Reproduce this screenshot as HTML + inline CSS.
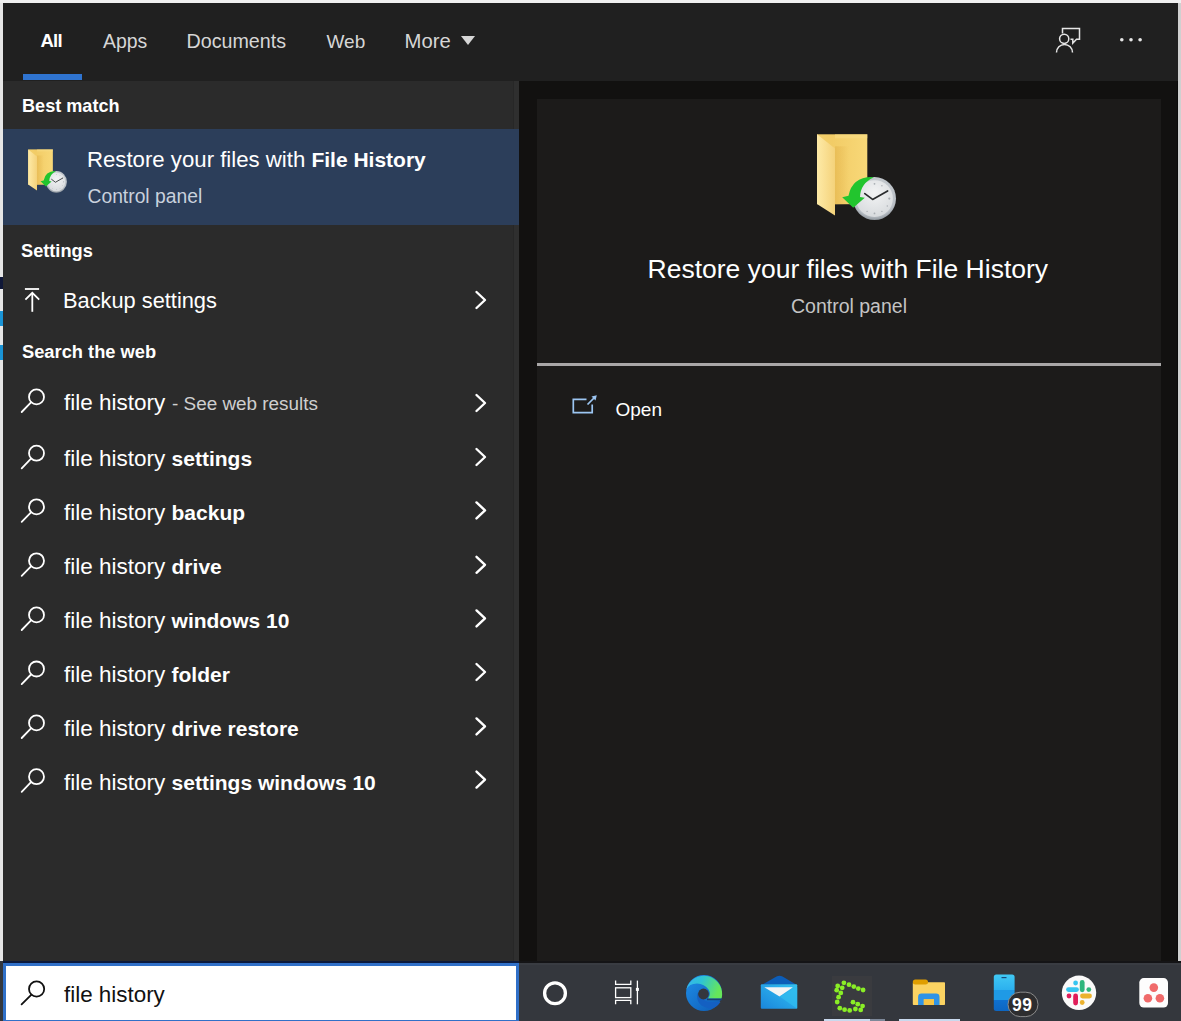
<!DOCTYPE html>
<html><head><meta charset="utf-8"><style>
html,body{margin:0;padding:0;}
body{width:1181px;height:1021px;position:relative;overflow:hidden;background:#f0f0f0;font-family:"Liberation Sans",sans-serif;}
.t{position:absolute;white-space:nowrap;line-height:1;}
.t b{font-weight:700;}
.r{position:absolute;}
svg{position:absolute;left:0;top:0;}
</style></head><body>
<div class="r" style="left:3px;top:3px;width:1175px;height:1018px;background:#121110"></div>
<div class="r" style="left:1178px;top:3px;width:3px;height:958px;background:#d0d0d0"></div><div class="r" style="left:1177px;top:81px;width:1px;height:880px;background:#0a0a0a"></div><div class="r" style="left:0;top:3px;width:3px;height:958px;background:#e6e6e6"></div>
<div class="r" style="left:0;top:277px;width:3px;height:12px;background:#101838"></div>
<div class="r" style="left:0;top:311px;width:3px;height:15px;background:#1a94d6"></div>
<div class="r" style="left:0;top:345px;width:3px;height:15px;background:#1a94d6"></div>
<div class="r" style="left:3px;top:3px;width:1175px;height:78px;background:#202020"></div>
<div class="r" style="left:23px;top:74px;width:59px;height:6px;background:#2f74d0"></div>
<div class="r" style="left:3px;top:81px;width:516px;height:882px;background:#2b2b2b"></div>
<div class="r" style="left:513px;top:81px;width:1px;height:882px;background:#272727"></div><div class="r" style="left:514px;top:81px;width:5px;height:882px;background:#2f2f2f"></div>
<div class="r" style="left:3px;top:129px;width:516px;height:96px;background:#2c3e5a"></div>
<div class="r" style="left:537px;top:99px;width:624px;height:862px;background:#1c1b1a"></div>
<div class="r" style="left:537px;top:363px;width:624px;height:3px;background:#a9a7a7"></div>
<div class="r" style="left:0px;top:961px;width:1181px;height:60px;background:#34373d"></div><div class="r" style="left:519px;top:961px;width:662px;height:2px;background:#141416"></div><div class="r" style="left:519px;top:963px;width:662px;height:2px;background:#393c42"></div>
<div class="r" style="left:3px;top:961px;width:516px;height:2px;background:#0c1a3c"></div><div class="r" style="left:3px;top:963px;width:510px;height:54px;background:#fff;border:3px solid #3070c8;border-bottom-width:1px"></div>
<div class="t" style="left:40.5px;top:32.2px;font-size:18.5px;color:#ffffff;font-weight:700;letter-spacing:-0.8px">All</div>
<div class="t" style="left:103.0px;top:31.5px;font-size:19.4px;color:#d6d6d6;font-weight:400;">Apps</div>
<div class="t" style="left:186.5px;top:31.5px;font-size:19.7px;color:#d6d6d6;font-weight:400;">Documents</div>
<div class="t" style="left:326.5px;top:32.1px;font-size:19px;color:#d6d6d6;font-weight:400;">Web</div>
<div class="t" style="left:404.5px;top:31.0px;font-size:20.3px;color:#d6d6d6;font-weight:400;">More</div>
<div class="t" style="left:22.0px;top:97.3px;font-size:18.1px;color:#fff;font-weight:700;">Best match</div>
<div class="t" style="left:87.0px;top:149.0px;font-size:22.2px;color:#fff;font-weight:400;">Restore your files with <b style="font-size:21px">File History</b></div>
<div class="t" style="left:87.5px;top:186.7px;font-size:19.3px;color:#c9d1dd;font-weight:400;">Control panel</div>
<div class="t" style="left:21.0px;top:241.6px;font-size:18.2px;color:#fff;font-weight:700;">Settings</div>
<div class="t" style="left:63.0px;top:289.5px;font-size:21.8px;color:#fff;font-weight:400;">Backup settings</div>
<div class="t" style="left:22.0px;top:343.3px;font-size:18.3px;color:#fff;font-weight:700;">Search the web</div>
<div class="t" style="left:64.0px;top:392.0px;font-size:22.5px;color:#fff;font-weight:400;">file history</div>
<div class="t" style="left:172.0px;top:395.0px;font-size:18.9px;color:#cfcfcf;font-weight:400;">- See web results</div>
<div class="t" style="left:64.0px;top:448.3px;font-size:22.5px;color:#fff;font-weight:400;">file history <b style="font-size:21px">settings</b></div>
<div class="t" style="left:64.0px;top:501.9px;font-size:22.5px;color:#fff;font-weight:400;">file history <b style="font-size:21px">backup</b></div>
<div class="t" style="left:64.0px;top:555.9px;font-size:22.5px;color:#fff;font-weight:400;">file history <b style="font-size:21px">drive</b></div>
<div class="t" style="left:64.0px;top:610.0px;font-size:22.5px;color:#fff;font-weight:400;">file history <b style="font-size:21px">windows 10</b></div>
<div class="t" style="left:64.0px;top:664.1px;font-size:22.5px;color:#fff;font-weight:400;">file history <b style="font-size:21px">folder</b></div>
<div class="t" style="left:64.0px;top:718.0px;font-size:22.5px;color:#fff;font-weight:400;">file history <b style="font-size:21px">drive restore</b></div>
<div class="t" style="left:64.0px;top:771.8px;font-size:22.5px;color:#fff;font-weight:400;">file history <b style="font-size:21px">settings windows 10</b></div>
<div class="t" style="left:647.5px;top:255.8px;font-size:26.5px;color:#fff;font-weight:400;">Restore your files with File History</div>
<div class="t" style="left:791.0px;top:297.3px;font-size:19.5px;color:#c4c4c4;font-weight:400;">Control panel</div>
<div class="t" style="left:615.5px;top:399.7px;font-size:19px;color:#fff;font-weight:400;">Open</div>
<div class="t" style="left:64.0px;top:983.7px;font-size:22.4px;color:#111;font-weight:400;">file history</div>

<svg width="1181" height="1021" viewBox="0 0 1181 1021">
<defs>
<linearGradient id="fBack" x1="0" y1="0" x2="1" y2="0">
 <stop offset="0" stop-color="#f4d06c"/><stop offset="0.3" stop-color="#f2cc66"/><stop offset="1" stop-color="#f8d878"/>
</linearGradient>
<linearGradient id="fFront" x1="0" y1="0" x2="1" y2="0">
 <stop offset="0" stop-color="#fdeaa6"/><stop offset="0.3" stop-color="#fbe39a"/><stop offset="1" stop-color="#f4d27a"/>
</linearGradient>
<linearGradient id="fShadow" x1="0" y1="0" x2="1" y2="0">
 <stop offset="0" stop-color="#e2b24a" stop-opacity="0.55"/><stop offset="1" stop-color="#e2b24a" stop-opacity="0"/>
</linearGradient>
<radialGradient id="clockRing" cx="0.5" cy="0.4" r="0.6">
 <stop offset="0" stop-color="#d8dce0"/><stop offset="0.85" stop-color="#b9bfc5"/><stop offset="1" stop-color="#8f969d"/>
</radialGradient>
<radialGradient id="clockFace" cx="0.5" cy="0.35" r="0.7">
 <stop offset="0" stop-color="#f2f3f4"/><stop offset="1" stop-color="#d6d9dc"/>
</radialGradient>
<linearGradient id="edgeTop" x1="0" y1="0" x2="1" y2="0.3">
 <stop offset="0" stop-color="#38b2f2"/><stop offset="0.45" stop-color="#2ec4d4"/><stop offset="1" stop-color="#66e65a"/>
</linearGradient>
<linearGradient id="edgeBot" x1="0" y1="0" x2="1" y2="1">
 <stop offset="0" stop-color="#1f8ee8"/><stop offset="1" stop-color="#0d5bb5"/>
</linearGradient>
<linearGradient id="mailBody" x1="0" y1="1" x2="1" y2="0">
 <stop offset="0" stop-color="#1a86dc"/><stop offset="1" stop-color="#33c2f2"/>
</linearGradient>
<linearGradient id="phoneG" x1="0" y1="0" x2="0" y2="1">
 <stop offset="0" stop-color="#40c8f4"/><stop offset="0.42" stop-color="#2cb0ee"/><stop offset="0.43" stop-color="#1f9ae6"/><stop offset="0.7" stop-color="#1f9ae6"/><stop offset="0.71" stop-color="#0f70cf"/><stop offset="1" stop-color="#0d66c2"/>
</linearGradient>
<g id="fhIcon">
 <rect x="0" y="0" width="50.3" height="69.9" fill="url(#fBack)"/>
 <rect x="18" y="0" width="32.3" height="4" fill="#f9dc84" opacity="0.6"/>
 <rect x="18" y="12" width="14" height="58" fill="url(#fShadow)"/>
 <polygon points="0,0 18,14.3 18,81.2 0,69.7" fill="url(#fFront)"/>
 <circle cx="57.5" cy="64.3" r="21.5" fill="url(#clockRing)"/>
 <circle cx="57.5" cy="64.3" r="18.4" fill="url(#clockFace)"/>
 <g fill="#a9aeb3">
  <circle cx="57.5" cy="49.5" r="0.9"/><circle cx="57.5" cy="79.1" r="0.9"/><circle cx="72.3" cy="64.3" r="1.1"/><circle cx="42.7" cy="64.3" r="0.9"/>
  <circle cx="64.9" cy="51.5" r="0.7"/><circle cx="70.3" cy="56.9" r="0.7"/><circle cx="70.3" cy="71.7" r="0.7"/><circle cx="64.9" cy="77.1" r="0.7"/><circle cx="50.1" cy="77.1" r="0.7"/>
 </g>
 <polyline points="47.8,59.3 55.6,65.1 70.6,56.7" fill="none" stroke="#2a2c2e" stroke-width="1.7" stroke-linejoin="round" stroke-linecap="round"/>
 <path d="M54.6,42.7 Q35,43 31.5,61.5 L25.2,63 L36.2,73.5 L47.8,63.5 L43,62.8 Q43.5,49 56.5,43.2 Z" fill="#22c52e"/>
</g>
</defs>
<polygon points="461,36 475,36 468,45" fill="#d6d6d6"/>
<circle cx="36.5" cy="396.9" r="7.5" fill="none" stroke="#fff" stroke-width="1.8"/><line x1="21.7" y1="412.0" x2="31" y2="402.4" stroke="#fff" stroke-width="1.8" stroke-linecap="round"/>
<circle cx="36.5" cy="453.2" r="7.5" fill="none" stroke="#fff" stroke-width="1.8"/><line x1="21.7" y1="468.3" x2="31" y2="458.7" stroke="#fff" stroke-width="1.8" stroke-linecap="round"/>
<circle cx="36.5" cy="506.8" r="7.5" fill="none" stroke="#fff" stroke-width="1.8"/><line x1="21.7" y1="521.9" x2="31" y2="512.3" stroke="#fff" stroke-width="1.8" stroke-linecap="round"/>
<circle cx="36.5" cy="560.8" r="7.5" fill="none" stroke="#fff" stroke-width="1.8"/><line x1="21.7" y1="575.9" x2="31" y2="566.3" stroke="#fff" stroke-width="1.8" stroke-linecap="round"/>
<circle cx="36.5" cy="614.9" r="7.5" fill="none" stroke="#fff" stroke-width="1.8"/><line x1="21.7" y1="630.0" x2="31" y2="620.4" stroke="#fff" stroke-width="1.8" stroke-linecap="round"/>
<circle cx="36.5" cy="669.0" r="7.5" fill="none" stroke="#fff" stroke-width="1.8"/><line x1="21.7" y1="684.1" x2="31" y2="674.5" stroke="#fff" stroke-width="1.8" stroke-linecap="round"/>
<circle cx="36.5" cy="722.9" r="7.5" fill="none" stroke="#fff" stroke-width="1.8"/><line x1="21.7" y1="738.0" x2="31" y2="728.4" stroke="#fff" stroke-width="1.8" stroke-linecap="round"/>
<circle cx="36.5" cy="776.7" r="7.5" fill="none" stroke="#fff" stroke-width="1.8"/><line x1="21.7" y1="791.8" x2="31" y2="782.2" stroke="#fff" stroke-width="1.8" stroke-linecap="round"/>
<polyline points="476.5,292.0 485,300.0 476.5,308.0" fill="none" stroke="#fff" stroke-width="2.4" stroke-linecap="round" stroke-linejoin="round"/>
<polyline points="476.5,395.0 485,403.0 476.5,411.0" fill="none" stroke="#fff" stroke-width="2.4" stroke-linecap="round" stroke-linejoin="round"/>
<polyline points="476.5,449.0 485,457.0 476.5,465.0" fill="none" stroke="#fff" stroke-width="2.4" stroke-linecap="round" stroke-linejoin="round"/>
<polyline points="476.5,502.4 485,510.4 476.5,518.4" fill="none" stroke="#fff" stroke-width="2.4" stroke-linecap="round" stroke-linejoin="round"/>
<polyline points="476.5,556.8 485,564.8 476.5,572.8" fill="none" stroke="#fff" stroke-width="2.4" stroke-linecap="round" stroke-linejoin="round"/>
<polyline points="476.5,610.4 485,618.4 476.5,626.4" fill="none" stroke="#fff" stroke-width="2.4" stroke-linecap="round" stroke-linejoin="round"/>
<polyline points="476.5,664.0 485,672.0 476.5,680.0" fill="none" stroke="#fff" stroke-width="2.4" stroke-linecap="round" stroke-linejoin="round"/>
<polyline points="476.5,718.4 485,726.4 476.5,734.4" fill="none" stroke="#fff" stroke-width="2.4" stroke-linecap="round" stroke-linejoin="round"/>
<polyline points="476.5,771.6 485,779.6 476.5,787.6" fill="none" stroke="#fff" stroke-width="2.4" stroke-linecap="round" stroke-linejoin="round"/>

<use href="#fhIcon" transform="translate(817,134.3)"/>
<use href="#fhIcon" transform="translate(28.2,149.4) scale(0.49,0.505)"/>
<g fill="none" stroke="#e6e6e6" stroke-width="1.5">
<path d="M1062.5,33.5 V28.5 H1079.5 V39.2 H1076.5 L1072.8,43.2 V39.2 H1070.5"/>
<circle cx="1064.2" cy="38.8" r="4.6"/>
<path d="M1056.5,52.5 A8,8 0 0 1 1072.5,52.5"/>
</g>
<g fill="#e6e6e6"><circle cx="1121.8" cy="39.8" r="1.8"/><circle cx="1131" cy="39.8" r="1.8"/><circle cx="1140.1" cy="39.8" r="1.8"/></g>
<g stroke="#fff" stroke-width="1.8" fill="none" stroke-linecap="butt">
<line x1="24.9" y1="289" x2="39.1" y2="289"/>
<polyline points="25.4,299.6 32.3,292.8 39.2,299.6" stroke-linejoin="miter"/>
<line x1="32.3" y1="293" x2="32.3" y2="311.8"/>
</g>
<g stroke="#9cc6f2" stroke-width="1.7" fill="none">
<polyline points="586.5,399.3 573.3,399.3 573.3,412.7 592.2,412.7 592.2,404.5"/>
<line x1="587.5" y1="404.5" x2="594.5" y2="397.5"/>
</g>
<polygon points="591.5,396.5 596.8,395.2 595.5,400.5" fill="#9cc6f2"/>
<circle cx="36.6" cy="989" r="7.6" fill="none" stroke="#111" stroke-width="1.8"/>
<line x1="21.6" y1="1004.4" x2="31.2" y2="994.8" stroke="#111" stroke-width="1.8" stroke-linecap="round"/>
<circle cx="555" cy="993.3" r="10.4" fill="none" stroke="#fff" stroke-width="3.3"/>
<g stroke="#fff" stroke-width="1.3" fill="none">
<polyline points="615.6,980.6 615.6,984.4 630.8,984.4 630.8,980.6"/>
<rect x="615.6" y="987.8" width="15.2" height="9.8"/>
<polyline points="615.6,1004.3 615.6,1000.4 630.8,1000.4 630.8,1004.3"/>
<line x1="637.4" y1="980.6" x2="637.4" y2="1004.3"/>
</g><rect x="635.9" y="987.9" width="3" height="3" fill="#fff"/>
<circle cx="704" cy="993" r="18" fill="url(#edgeBot)"/>
<path d="M721.6,998.5 A18,18 0 1 0 686.3,989.5 Q689,983.5 697,983.5 Q704.5,984 708.5,989.5 Q711.5,994.5 708,998.5 Z" fill="url(#edgeTop)"/>
<path d="M697.5,993 Q695,1006 710,1008.5 Q716.5,1008 720.5,1002 L711,1002 Q702.5,1001.5 701.5,995 Z" fill="#1460c2"/>
<circle cx="703.5" cy="994" r="5.4" fill="#34373d"/>
<rect x="707" y="998.6" width="15" height="1.6" fill="#1a3f73"/>
<path d="M762.5,984.5 L776.5,976.6 Q779.5,975 782.5,976.6 L796,984.5 Z" fill="#0c5db8"/>
<rect x="760.8" y="984.3" width="36.4" height="24.5" rx="1" fill="url(#mailBody)"/>
<polygon points="764.3,987.2 792.9,987.2 779.5,996.5" fill="#f4f4f4"/>
<polygon points="779.5,996.5 797.2,987 797.2,1008.8" fill="#30bdf0" opacity="0.7"/>
<rect x="832" y="976" width="40" height="40" fill="#3a3b3f"/>
<g fill="#8aee26"><circle cx="843.9" cy="982.8" r="2.4"/><circle cx="837.7" cy="985.9" r="2.4"/><circle cx="849" cy="984.7" r="2.4"/><circle cx="853.8" cy="986.6" r="2.4"/><circle cx="858.3" cy="988.6" r="2.4"/><circle cx="863.1" cy="990" r="2.4"/><circle cx="842.2" cy="987.8" r="2.4"/><circle cx="840.8" cy="992.9" r="2.4"/><circle cx="838.6" cy="997.2" r="2.4"/><circle cx="837.2" cy="1002" r="2.4"/><circle cx="839.8" cy="1008.2" r="2.4"/><circle cx="844.6" cy="1009.7" r="2.4"/><circle cx="849.7" cy="1010.4" r="2.4"/><circle cx="855.4" cy="1009" r="2.4"/><circle cx="860.7" cy="1009.9" r="2.4"/><circle cx="853" cy="1002.2" r="2.4"/><circle cx="857.8" cy="1004.2" r="2.4"/><circle cx="862.6" cy="1006.1" r="2.4"/><circle cx="836.7" cy="990.2" r="2.4"/></g>
<rect x="912.8" y="982.2" width="32.2" height="22.9" rx="0.8" fill="#fbd362"/>
<rect x="912.8" y="979.6" width="15.2" height="5" rx="2.5" fill="#e09e00"/>
<path d="M918.1,1005 V997 Q918.1,993.6 921.5,993.6 H936 Q939.5,993.6 939.5,997 V1005 H934 V999.3 H923.8 V1005 Z" fill="#2f93e6"/>
<rect x="923.8" y="999.3" width="10.2" height="5.7" fill="#f6c445"/>
<rect x="993.8" y="974.6" width="20.8" height="36.4" rx="2.5" fill="url(#phoneG)"/>
<rect x="1001.5" y="977" width="5" height="1.2" fill="#1a4a7a"/>
<rect x="1008" y="992.2" width="30" height="24.4" rx="12.2" fill="#2d2d2f" stroke="#8c8c8c" stroke-width="1"/>
<circle cx="1079" cy="992.8" r="17.2" fill="#fafafa"/>
<g stroke-linecap="round" stroke-width="4.8" fill="none">
<line x1="1068.5" y1="989.6" x2="1076.5" y2="989.6" stroke="#36c5f0"/>
<line x1="1082.2" y1="982.5" x2="1082.2" y2="989.8" stroke="#2eb67d"/>
<line x1="1075.6" y1="996" x2="1075.6" y2="1003" stroke="#e01e5a"/>
<line x1="1082.5" y1="996" x2="1089.5" y2="996" stroke="#ecb22e"/>
</g>
<circle cx="1075.6" cy="983" r="2.4" fill="#36c5f0"/><circle cx="1088.8" cy="989.6" r="2.4" fill="#2eb67d"/>
<circle cx="1069" cy="996" r="2.4" fill="#e01e5a"/><circle cx="1082.2" cy="1002.5" r="2.4" fill="#ecb22e"/>
<rect x="1139.3" y="978.1" width="28.7" height="29.4" rx="4.5" fill="#fdfdfd"/>
<g fill="#f06a6a"><circle cx="1153.8" cy="987.6" r="4.3"/><circle cx="1147.9" cy="998.2" r="4.3"/><circle cx="1159.9" cy="998.2" r="4.3"/></g>
<rect x="824" y="1019" width="46" height="2" fill="#c9d9ee"/><rect x="870" y="1019" width="15" height="2" fill="#7d8899"/><rect x="899" y="1019" width="61" height="2" fill="#c9d9ee"/>
</svg>
<div class="t" style="left:1012px;top:997px;font-size:17.5px;font-weight:700;color:#fff;letter-spacing:0.6px">99</div>
</body></html>
